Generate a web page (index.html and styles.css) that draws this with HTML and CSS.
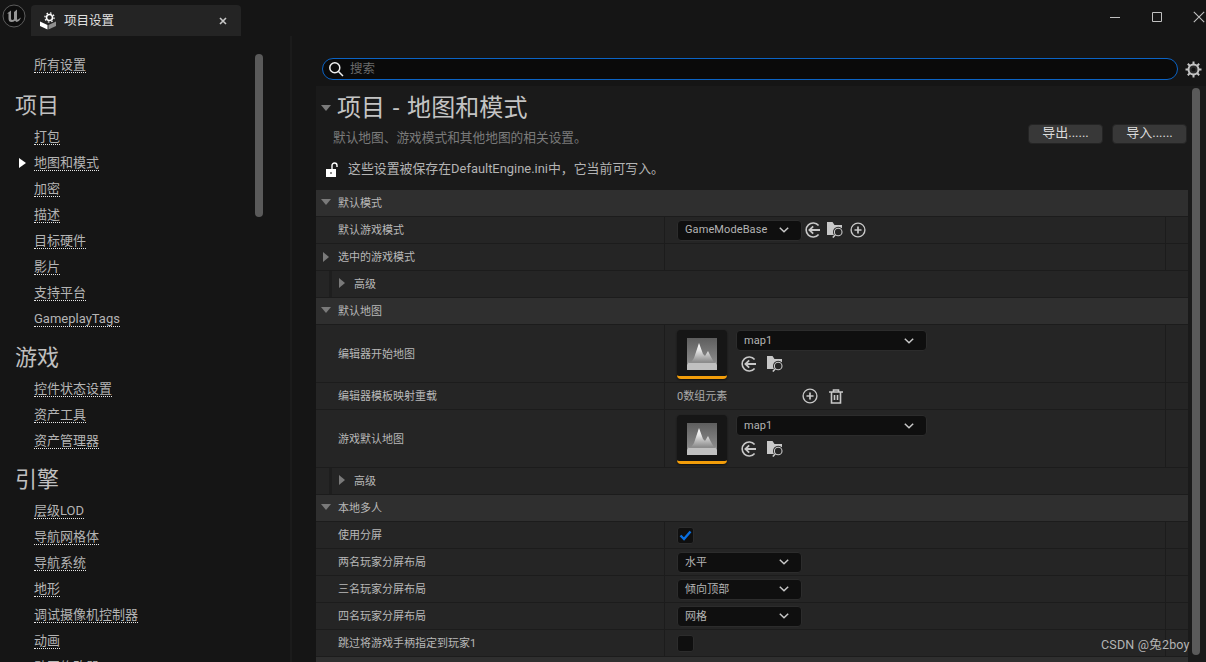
FILE: index.html
```html
<!DOCTYPE html>
<html lang="zh-CN">
<head>
<meta charset="utf-8">
<title>项目设置</title>
<link rel="stylesheet" href="styles.css">
</head>
<body>
<svg class="sprite" aria-hidden="true">
  <defs>
    <linearGradient id="g-sky" x1="0" y1="0" x2="0" y2="1">
      <stop offset="0" stop-color="#5e5e5e"/>
      <stop offset="1" stop-color="#8f8f8f"/>
    </linearGradient>
    <linearGradient id="g-mtn" x1="0" y1="0" x2="0" y2="1">
      <stop offset="0" stop-color="#fff"/>
      <stop offset=".35" stop-color="#e4e4e4"/>
      <stop offset="1" stop-color="#7c7c7c"/>
    </linearGradient>
  </defs>
  <symbol id="i-back" viewBox="0 0 16 16">
    <path d="M13.600 3.600A7 7 0 1 0 13.600 12.400" fill="none" stroke="currentColor" stroke-width="1.600"/>
    <path d="M8.200 4.400 4.400 8l3.800 3.600M4.800 8H15" fill="none" stroke="currentColor" stroke-width="1.800"/>
  </symbol>
  <symbol id="i-folder" viewBox="0 0 17 16">
    <path d="M0 0h5.500l2 3H15v10H0z" fill="currentColor"/>
    <circle cx="11.200" cy="10" r="5.200" fill="#252525"/>
    <path d="M8 12.500 4.500 16h3l2.500-2.500z" fill="#252525"/>
    <circle cx="11.200" cy="10" r="3.800" fill="none" stroke="currentColor" stroke-width="1.100"/>
    <path d="M8.400 12.800 5.800 15.600" stroke="currentColor" stroke-width="1.500"/>
  </symbol>
  <symbol id="i-plus" viewBox="0 0 16 16">
    <circle cx="8" cy="8" r="6.900" fill="none" stroke="currentColor" stroke-width="1.400"/>
    <path d="M8 4.500v7M4.500 8h7" stroke="currentColor" stroke-width="1.700"/>
  </symbol>
  <symbol id="i-chev" viewBox="0 0 10 6">
    <path d="M.8.8 5 4.800 9.200.8" fill="none" stroke="currentColor" stroke-width="1.500"/>
  </symbol>
  <symbol id="i-map" viewBox="0 0 30 32">
    <path d="M0 0h30v27H0z" fill="url(#g-sky)"/>
    <path d="M3 26 7 20 12 5l4 11 2 2 3-5 3 6 4 7z" fill="url(#g-mtn)"/>
    <path d="M0 27 2 24h26l2 3v5H0z" fill="#c0c0c0"/>
    <path d="M2 24h26l.7 1H1.300z" fill="#8c8c8c"/>
  </symbol>
</svg>

<header class="topbar">
  <svg class="ue-logo" width="24" height="24" viewBox="0 0 24 24">
    <circle cx="12" cy="12" r="11" fill="#0d0d0d" stroke="#5c5c5c" stroke-width="1"/>
    <path d="M5 9.500 9 6.500v8q0 1.500 1.500 1.500 1 0 1.500-1V8l3-2.500V15q0 1 1 .5l3-2q-1.500 4-4.500 4.500L13 16.800Q11.500 18 9.500 18q-3 0-3-3.500v-5z" fill="#969696"/>
  </svg>
  <div class="tab">
    <svg class="tab-icon" width="18" height="18" viewBox="0 0 18 18">
      <path d="M1 9.500 8.500 13v4.500L1 14z" fill="#fff"/>
      <path d="M9.500 13 17 9.500V14l-7.500 3.500z" fill="#8f8f8f"/>
      <circle cx="10.500" cy="5.500" r="3" fill="none" stroke="#fff" stroke-width="1.600"/>
      <circle cx="10.500" cy="5.500" r="4.600" fill="none" stroke="#fff" stroke-width="1.200" stroke-dasharray="1.600 2"/>
    </svg>
    <span class="tab-title">项目设置</span>
    <svg class="tab-close" width="8" height="8" viewBox="0 0 8 8"><path d="M1 1l6 6M7 1 1 7" stroke="#c8c8c8" stroke-width="1.600"/></svg>
  </div>
  <div class="winctl">
    <svg width="12" height="12" viewBox="0 0 12 12"><path d="M1 6.500h10" stroke="#c0c0c0" stroke-width="1"/></svg>
    <svg width="12" height="12" viewBox="0 0 12 12"><path d="M1.500 1.500h9v9h-9z" fill="none" stroke="#c0c0c0" stroke-width="1"/></svg>
    <svg width="12" height="12" viewBox="0 0 12 12"><path d="M.8.8l10.400 10.400M11.200.8.800 11.200" stroke="#c0c0c0" stroke-width="1.100"/></svg>
  </div>
</header>

<div class="body-row">
  <nav class="sidebar">
    <div class="nav-list">
      <div class="nav-item nav-first"><a class="nav-link">所有设置</a></div>
      <h2 class="nav-heading">项目</h2>
      <div class="nav-item"><a class="nav-link">打包</a></div>
      <div class="nav-item nav-active"><a class="nav-link">地图和模式</a></div>
      <div class="nav-item"><a class="nav-link">加密</a></div>
      <div class="nav-item"><a class="nav-link">描述</a></div>
      <div class="nav-item"><a class="nav-link">目标硬件</a></div>
      <div class="nav-item"><a class="nav-link">影片</a></div>
      <div class="nav-item"><a class="nav-link">支持平台</a></div>
      <div class="nav-item"><a class="nav-link">GameplayTags</a></div>
      <h2 class="nav-heading">游戏</h2>
      <div class="nav-item"><a class="nav-link">控件状态设置</a></div>
      <div class="nav-item"><a class="nav-link">资产工具</a></div>
      <div class="nav-item"><a class="nav-link">资产管理器</a></div>
      <h2 class="nav-heading">引擎</h2>
      <div class="nav-item"><a class="nav-link">层级LOD</a></div>
      <div class="nav-item"><a class="nav-link">导航网格体</a></div>
      <div class="nav-item"><a class="nav-link">导航系统</a></div>
      <div class="nav-item"><a class="nav-link">地形</a></div>
      <div class="nav-item"><a class="nav-link">调试摄像机控制器</a></div>
      <div class="nav-item"><a class="nav-link">动画</a></div>
      <div class="nav-item"><a class="nav-link">动画修改器</a></div>
    </div>
    <div class="side-scroll"></div>
  </nav>

  <main class="main">
    <div class="search-row">
      <div class="search">
        <svg class="search-icon" width="16" height="16" viewBox="0 0 16 16">
          <circle cx="6.800" cy="6.800" r="5" fill="none" stroke="#f0f0f0" stroke-width="1.500"/>
          <path d="M10.500 10.500 15 15" stroke="#f0f0f0" stroke-width="1.500"/>
        </svg>
        <span class="search-text">搜索</span>
      </div>
      <svg class="gear" width="17" height="17" viewBox="0 0 17 17">
        <circle cx="8.500" cy="8.500" r="5" fill="#2a2a2a" stroke="#c4c4c4" stroke-width="2"/>
        <circle cx="8.500" cy="8.500" r="2" fill="#111"/>
        <path d="M8.500.5v3M8.500 13.500v3M.5 8.500h3M13.500 8.500h3M2.800 2.800 5 5M12 12l2.200 2.200M14.200 2.800 12 5M5 12l-2.200 2.200" stroke="#c4c4c4" stroke-width="2"/>
      </svg>
    </div>

    <div class="panel-row">
      <section class="panel">
        <div class="panel-head">
          <div class="title-row">
            <span class="tri-down"></span>
            <h1 class="title">项目 - 地图和模式</h1>
          </div>
          <div class="desc-row">
            <p class="desc">默认地图、游戏模式和其他地图的相关设置。</p>
            <div class="btns">
              <button class="btn">导出......</button>
              <button class="btn">导入......</button>
            </div>
          </div>
          <div class="lock-row">
            <svg width="12" height="15" viewBox="0 0 12 15">
              <path d="M0 7h10v8H0z" fill="#fff"/>
              <path d="M4.500 10h1v2h-1z" fill="#1a1a1a"/>
              <path d="M6 7V3.500a2.500 2.500 0 0 1 5 0V5" fill="none" stroke="#fff" stroke-width="1.400"/>
            </svg>
            <span class="lock-text">这些设置被保存在DefaultEngine.ini中，它当前可写入。</span>
          </div>
        </div>

        <div class="sec"><span class="tri-down tri-sm"></span>默认模式</div>
        <div class="row">
          <div class="cell-name">默认游戏模式</div>
          <div class="cell-val">
            <div class="combo"><span class="combo-text">GameModeBase</span><svg class="chev" width="10" height="6"><use href="#i-chev"/></svg></div>
            <div class="tools">
              <svg class="ico" width="16" height="16"><use href="#i-back"/></svg>
              <svg class="ico" width="17" height="16"><use href="#i-folder"/></svg>
              <svg class="ico" width="16" height="16"><use href="#i-plus"/></svg>
            </div>
          </div>
          <div class="cell-end"></div>
        </div>
        <div class="row">
          <div class="cell-name"><span class="tri-right tri-abs"></span>选中的游戏模式</div>
          <div class="cell-val"></div>
          <div class="cell-end"></div>
        </div>
        <div class="row row-adv"><span class="adv-bar"></span><span class="tri-right"></span>高级</div>

        <div class="sec"><span class="tri-down tri-sm"></span>默认地图</div>
        <div class="row row-map">
          <div class="cell-name">编辑器开始地图</div>
          <div class="cell-val map-val">
            <div class="thumb"><svg width="30" height="32"><use href="#i-map"/></svg></div>
            <div class="map-side">
              <div class="combo combo-wide"><span class="combo-text">map1</span><svg class="chev" width="10" height="6"><use href="#i-chev"/></svg></div>
              <div class="tools tools-map">
                <svg class="ico" width="16" height="16"><use href="#i-back"/></svg>
                <svg class="ico" width="17" height="16"><use href="#i-folder"/></svg>
              </div>
            </div>
          </div>
          <div class="cell-end"></div>
        </div>
        <div class="row">
          <div class="cell-name">编辑器模板映射重载</div>
          <div class="cell-val">
            <span class="count">0数组元素</span>
            <svg class="ico" width="16" height="16"><use href="#i-plus"/></svg>
            <svg class="ico trash" width="14" height="15" viewBox="0 0 14 15">
              <path d="M0 3h14M4.500 3V1h5v2M2.500 3v11h9V3M5.500 6v5M8.500 6v5" fill="none" stroke="currentColor" stroke-width="1.600"/>
            </svg>
          </div>
          <div class="cell-end"></div>
        </div>
        <div class="row row-map">
          <div class="cell-name">游戏默认地图</div>
          <div class="cell-val map-val">
            <div class="thumb"><svg width="30" height="32"><use href="#i-map"/></svg></div>
            <div class="map-side">
              <div class="combo combo-wide"><span class="combo-text">map1</span><svg class="chev" width="10" height="6"><use href="#i-chev"/></svg></div>
              <div class="tools tools-map">
                <svg class="ico" width="16" height="16"><use href="#i-back"/></svg>
                <svg class="ico" width="17" height="16"><use href="#i-folder"/></svg>
              </div>
            </div>
          </div>
          <div class="cell-end"></div>
        </div>
        <div class="row row-adv"><span class="adv-bar"></span><span class="tri-right"></span>高级</div>

        <div class="sec"><span class="tri-down tri-sm"></span>本地多人</div>
        <div class="row">
          <div class="cell-name">使用分屏</div>
          <div class="cell-val">
            <div class="check"><svg width="13" height="11" viewBox="0 0 13 11"><path d="M1.500 5.500 5 9l6.500-7.500" fill="none" stroke="#0a6fe0" stroke-width="2.400"/></svg></div>
          </div>
          <div class="cell-end"></div>
        </div>
        <div class="row">
          <div class="cell-name">两名玩家分屏布局</div>
          <div class="cell-val"><div class="combo"><span class="combo-text">水平</span><svg class="chev" width="10" height="6"><use href="#i-chev"/></svg></div></div>
          <div class="cell-end"></div>
        </div>
        <div class="row">
          <div class="cell-name">三名玩家分屏布局</div>
          <div class="cell-val"><div class="combo"><span class="combo-text">倾向顶部</span><svg class="chev" width="10" height="6"><use href="#i-chev"/></svg></div></div>
          <div class="cell-end"></div>
        </div>
        <div class="row">
          <div class="cell-name">四名玩家分屏布局</div>
          <div class="cell-val"><div class="combo"><span class="combo-text">网格</span><svg class="chev" width="10" height="6"><use href="#i-chev"/></svg></div></div>
          <div class="cell-end"></div>
        </div>
        <div class="row">
          <div class="cell-name">跳过将游戏手柄指定到玩家1</div>
          <div class="cell-val"><div class="check"></div></div>
          <div class="cell-end"></div>
        </div>
        <div class="sec"></div>
      </section>
      <div class="main-scroll"></div>
    </div>
  </main>
</div>
<div class="watermark">CSDN @兔2boy</div>
</body>
</html>
```

FILE: styles.css
```css
* { box-sizing: border-box; }
html, body { margin: 0; height: 100%; }
body {
  position: relative;
  height: 662px;
  overflow: hidden;
  background: #151515;
  color: #c0c0c0;
  font-family: Roboto, "Noto Sans CJK SC", sans-serif;
  display: flex;
  flex-direction: column;
}
.sprite { width: 0; height: 0; flex: none; overflow: hidden; }

/* top bar */
.topbar {
  height: 36px;
  flex: none;
  display: flex;
  align-items: flex-start;
  padding: 4px 0 0 2px;
}
.ue-logo { flex: none; }
.tab {
  width: 210px;
  height: 31px;
  margin: 1px 0 0 5px;
  background: #242424;
  border-radius: 4px 4px 0 0;
  display: flex;
  align-items: center;
  padding-left: 8px;
}
.tab-icon { flex: none; }
.tab-title { font-size: 12.500px; color: #e0e0e0; margin-left: 7px; padding-bottom: 2px; flex: 1; }
.tab-close { margin-right: 14px; }
.winctl {
  margin-left: auto;
  display: flex;
  gap: 30px;
  padding: 7px 1px 0 0;
}

.body-row { flex: 1; display: flex; min-height: 0; }

/* sidebar */
.sidebar {
  width: 292px;
  flex: none;
  display: flex;
  border-right: 2px solid #1b1b1b;
  overflow: hidden;
}
.nav-list { width: 255px; padding-top: 16px; flex: none; }
.nav-item {
  position: relative;
  height: 26px;
  padding-left: 34px;
  display: flex;
  align-items: center;
  font-size: 13px;
}
.nav-first { margin-bottom: 2px; }
.nav-link {
  color: #b4b4b4;
  line-height: 15px;
  border-bottom: 1px dotted #e8e8e8;
}
.nav-active::before {
  content: "";
  position: absolute;
  left: 19px;
  top: 8px;
  border-left: 7px solid #fff;
  border-top: 5.500px solid transparent;
  border-bottom: 5.500px solid transparent;
}
.nav-heading {
  margin: 0;
  padding: 11px 0 3px 15px;
  height: 44px;
  font-size: 22px;
  line-height: 30px;
  font-weight: 400;
  color: #c0c0c0;
}
.side-scroll {
  width: 8px;
  height: 163px;
  margin-top: 18px;
  background: #5a5a5a;
  border-radius: 4px;
  flex: none;
}

/* main */
.main {
  flex: 1;
  min-width: 0;
  padding: 22px 0 0 24px;
  display: flex;
  flex-direction: column;
  overflow: hidden;
}
.search-row {
  display: flex;
  align-items: center;
  height: 22px;
  margin-bottom: 6px;
  padding-left: 6px;
  flex: none;
}
.search {
  width: 856px;
  height: 22px;
  background: #0a0a0a;
  border: 1px solid #0b63c4;
  border-radius: 11px;
  display: flex;
  align-items: center;
  padding-left: 5px;
}
.search-icon { flex: none; }
.search-text { font-size: 12.500px; color: #6a6a6a; margin-left: 6px; padding-bottom: 4px; }
.gear { margin: 0 0 0 7px; flex: none; }

.panel-row { display: flex; flex: 1; min-height: 0; background: #1a1a1a; }
.panel { width: 872px; flex: none; overflow: hidden; }
.main-scroll {
  width: 8px;
  height: 567px;
  margin: 2px 0 0 4px;
  background: #5a5a5a;
  border-radius: 4px;
  flex: none;
}

.panel-head {
  height: 104px;
  background: #1a1a1a;
  padding-top: 7px;
}
.title-row { display: flex; align-items: center; height: 30px; padding-left: 5px; }
.tri-down {
  display: inline-block;
  flex: none;
  border-top: 6px solid #7a7a7a;
  border-left: 5px solid transparent;
  border-right: 5px solid transparent;
}
.title {
  margin: 0 0 0 6px;
  font-size: 24px;
  line-height: 30px;
  font-weight: 400;
  word-spacing: 1.500px;
  letter-spacing: .1px;
  color: #c4c4c4;
}
.desc-row {
  display: flex;
  justify-content: space-between;
  align-items: flex-start;
  height: 26px;
  margin-top: 1px;
  padding: 0 1px 0 17px;
}
.desc { margin: 0; font-size: 12.700px; line-height: 28px; color: #7a7a7a; }
.btns { display: flex; gap: 9px; }
.btn {
  width: 75px;
  height: 20px;
  padding: 0 0 2px;
  background: #383838;
  border: 1px solid #242424;
  border-radius: 4px;
  color: #dcdcdc;
  font: 13px/16px Roboto, "Noto Sans CJK SC", sans-serif;
}
.lock-row {
  display: flex;
  align-items: center;
  height: 38px;
  padding-left: 10px;
  gap: 10px;
  font-size: 12.900px;
  color: #b4b4b4;
}
.lock-text { padding-bottom: 4px; }

.sec {
  height: 27px;
  background: #2f2f2f;
  border-bottom: 1px solid #1c1c1c;
  display: flex;
  align-items: center;
  padding: 0 0 2px 5px;
  font-size: 11px;
  color: #b8b8b8;
  gap: 7px;
}
.row {
  min-height: 27px;
  background: #252525;
  border-bottom: 1px solid #1c1c1c;
  display: flex;
  font-size: 11px;
  color: #b8b8b8;
}
.row-map { height: 58px; }
.cell-name {
  position: relative;
  width: 348px;
  flex: none;
  padding: 0 0 2px 22px;
  display: flex;
  align-items: center;
}
.cell-val {
  width: 502px;
  flex: none;
  border-left: 1px solid #1c1c1c;
  border-right: 1px solid #1c1c1c;
  padding-left: 12px;
  display: flex;
  align-items: center;
}
.cell-end { flex: 1; }
.tri-right {
  display: inline-block;
  flex: none;
  border-left: 6px solid #7a7a7a;
  border-top: 5px solid transparent;
  border-bottom: 5px solid transparent;
}
.tri-abs { position: absolute; left: 7px; top: 8px; }
.row-adv {
  align-items: center;
  padding: 0 0 2px 23px;
  position: relative;
}
.row-adv .tri-right { margin-right: 9px; }
.adv-bar {
  position: absolute;
  left: 13px;
  top: 0;
  bottom: 0;
  width: 3px;
  background: #1e1e1e;
}
.combo {
  width: 125px;
  height: 21px;
  background: #0f0f0f;
  border: 1px solid #2c2c2c;
  border-radius: 4px;
  display: flex;
  align-items: center;
  justify-content: space-between;
  padding: 0 12px 0 7px;
  flex: none;
  color: #b4b4b4;
}
.combo-wide { width: 191px; }
.combo-text { letter-spacing: .1px; padding-bottom: 2px; }
.combo-wide .combo-text { padding-bottom: 0; }
.chev { color: #c8c8c8; flex: none; }
.tools { display: flex; align-items: center; gap: 6px; margin-left: 3px; }
.ico { color: #c8c8c8; flex: none; display: block; }
.map-val { align-items: flex-start; padding-top: 5px; }
.thumb {
  width: 50px;
  height: 49px;
  background: #161616;
  border-radius: 4px;
  border-bottom: 3px solid #f29d0a;
  box-shadow: 0 1px 2px #111;
  display: flex;
  justify-content: center;
  padding-top: 8px;
  flex: none;
}
.map-side { margin-left: 9px; }
.tools-map { gap: 10px; margin: 5px 0 0 5px; }
.count { width: 125px; color: #aaa; flex: none; padding-bottom: 2px; }
.trash { margin-left: 11px; }
.check {
  width: 17px;
  height: 17px;
  background: #0f0f0f;
  border: 1px solid #2c2c2c;
  border-radius: 3px;
  display: flex;
  align-items: center;
  justify-content: center;
}

.watermark {
  position: absolute;
  left: 1101px;
  top: 637px;
  font: 12.500px/16px Roboto, "Noto Sans CJK SC", sans-serif;
  color: #b4b4b4;
  letter-spacing: .2px;
}
```
